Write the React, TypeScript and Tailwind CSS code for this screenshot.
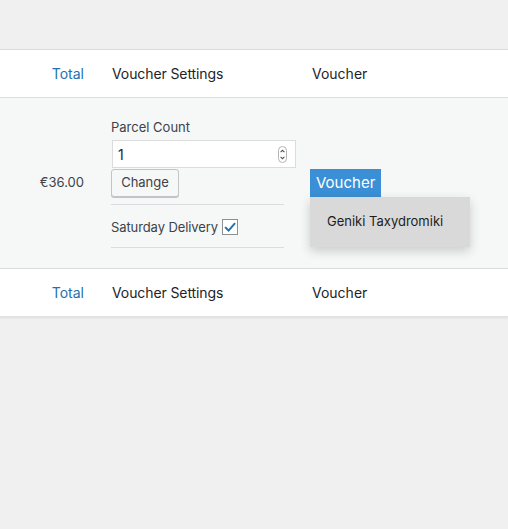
import React from 'react';

const Spinner: React.FC = () => (
  <svg width="9" height="17" viewBox="0 0 9 17" className="absolute right-[8px] top-[5px]">
    <rect x="0.5" y="0.5" width="8" height="16" rx="4" fill="#fff" stroke="#b5b5b5" />
    <path d="M2.6 6.2 L4.5 4.3 L6.4 6.2" fill="none" stroke="#555" strokeWidth="1.1" />
    <path d="M2.6 10.8 L4.5 12.7 L6.4 10.8" fill="none" stroke="#555" strokeWidth="1.1" />
  </svg>
);

const HeadRow: React.FC<{ bottom?: boolean }> = ({ bottom }) => (
  <div
    className={`grid grid-cols-[84px_226px_1fr] h-[48px] items-center bg-white text-[14px] ${
      bottom ? 'shadow-[0_1px_2px_rgba(0,0,0,0.08)] border-b border-[#e3e3e3]' : 'border-b border-[#dcdcde]'
    }`}
  >
    <div className="text-right text-[#2271b1]">Total</div>
    <div className="pl-[28px] text-[#1d2327] tracking-[-0.1px]">Voucher Settings</div>
    <div className="pl-[2px] text-[#1d2327]">Voucher</div>
  </div>
);

export default function App() {
  return (
    <div className="min-h-[529px] bg-[#f0f0f1] pt-[49px]" style={{ fontFamily: 'Inter, "Liberation Sans", sans-serif' }}>
      <div className="border-t border-[#dcdcde]">
        <HeadRow />

        <div className="grid grid-cols-[84px_226px_1fr] bg-[#f6f7f7] border-b border-[#dcdcde] text-[13px] text-[#3c434a]">
          <div className="flex items-center justify-end text-[13px] text-[#3c434a]">€36.00</div>

          <div className="pl-[27px] pt-[20px] pb-[20px] flex flex-col">
            <div className="leading-[18px] h-[18px]">Parcel Count</div>
            <div className="relative mt-[4px] ml-[1px] w-[184px] h-[28px] bg-white border border-[#dcdcde] flex items-center pl-[5px] text-[14px] text-[#1d2327]">
              1
              <Spinner />
            </div>
            <button className="mt-[1px] w-[68px] h-[28px] rounded-[3px] border border-[#c3c4c7] bg-[#f6f7f7] text-[13px] text-[#3c434a] shadow-[0_1px_0_#c3c4c7]">
              Change
            </button>
            <div className="mt-[7px] w-[173px] border-t border-[#dcdcde]" />
            <div className="mt-[14px] h-[16px] flex items-center gap-[4px]">
              <span className="leading-[16px] tracking-[-0.1px]">Saturday Delivery</span>
              <span className="w-[16px] h-[16px] border border-[#8c8f94] bg-white flex items-center justify-center">
                <svg width="12" height="11" viewBox="0 0 12 11">
                  <path d="M1.8 5.8 L4.6 8.6 L10.4 1.8" fill="none" stroke="#2271b1" strokeWidth="2" strokeLinecap="square" />
                </svg>
              </span>
            </div>
            <div className="mt-[12px] w-[173px] border-t border-[#dcdcde]" />
          </div>

          <div className="flex items-center">
            <div className="relative">
              <div className="h-[28px] px-[6px] flex items-center bg-[#3a8fd6] text-white text-[15px]">Voucher</div>
              <div className="absolute left-0 top-[28px] w-[160px] h-[50px] bg-[#d9d9d9] shadow-[0_4px_10px_rgba(0,0,0,0.18)] flex items-center pl-[17px] text-[13px] text-[#1d1d1d]">
                Geniki Taxydromiki
              </div>
            </div>
          </div>
        </div>

        <HeadRow bottom />
      </div>
    </div>
  );
}
